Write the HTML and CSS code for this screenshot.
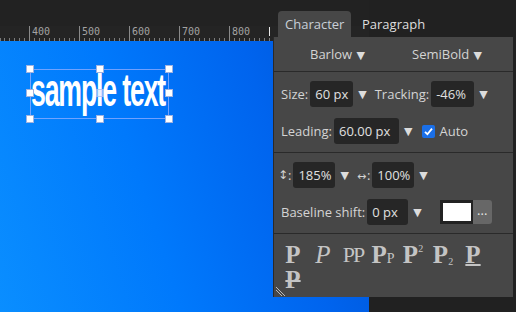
FILE: index.html
```html
<!DOCTYPE html>
<html lang="en">
<head>
    <meta charset="UTF-8">
    <meta name="viewport" content="width=device-width, initial-scale=1.0">
    <title>Character panel</title>
    <link rel="stylesheet" href="styles.css">
</head>
<body>
    <div class="screen">
        <div class="workspace">
            <div class="topbar"></div>
            <div class="ruler">
                <div class="ruler-labels">
                    <span></span><span>400</span><span>500</span><span>600</span><span>700</span><span>800</span><span></span>
                </div>
                <span class="ruler-cursor"></span>
            </div>
            <div class="canvas">
                <!-- selected text layer with transform handles -->
                <div class="text-layer">
                    <span class="sample">sample text</span>
                    <i class="handle h-tl"></i><i class="handle h-tc"></i><i class="handle h-tr"></i>
                    <i class="handle h-ml"></i><i class="handle h-mc"></i><i class="handle h-mr"></i>
                    <i class="handle h-bl"></i><i class="handle h-bc"></i><i class="handle h-br"></i>
                </div>
            </div>
        </div>

        <div class="panel">
            <div class="tabs">
                <div class="tab active">Character</div>
                <div class="tab">Paragraph</div>
            </div>
            <div class="panel-body">
                <div class="font-row">
                    <span class="font-name">Barlow <span class="arrow">▼</span></span>
                    <span class="font-style">SemiBold <span class="arrow">▼</span></span>
                </div>

                <div class="section">
                    <div class="row">
                        <span class="label">Size:</span>
                        <span class="field w43">60 px</span>
                        <span class="arrow">▼</span>
                        <span class="label">Tracking:</span>
                        <span class="field w43">-46%</span>
                        <span class="arrow">▼</span>
                    </div>
                    <div class="row">
                        <span class="label">Leading:</span>
                        <span class="field w65">60.00 px</span>
                        <span class="arrow">▼</span>
                        <span class="check">
                            <svg width="9" height="9" viewBox="0 0 9 9"><path d="M1 4.8 L3.4 7.2 L8 1.6" fill="none" stroke="#fff" stroke-width="1.8"/></svg>
                        </span>
                        <span class="label">Auto</span>
                    </div>
                </div>

                <div class="section">
                    <div class="row">
                        <span class="label scale-label"><span class="vscale">↕</span><span>:</span></span>
                        <span class="field w42">185%</span>
                        <span class="arrow">▼</span>
                        <span class="label"><span class="hscale">↔</span>:</span>
                        <span class="field w42">100%</span>
                        <span class="arrow">▼</span>
                    </div>
                    <div class="row">
                        <span class="label">Baseline shift:</span>
                        <span class="field w41">0 px</span>
                        <span class="arrow">▼</span>
                        <span class="swatch"><span class="swatch-color"></span></span>
                        <span class="swatch-more">...</span>
                    </div>
                </div>

                <div class="glyphs">
                    <span class="glyph">P</span>
                    <span class="glyph italic">P</span>
                    <span class="glyph caps">PP</span>
                    <span class="glyph">P<small>P</small></span>
                    <span class="glyph">P<sup>2</sup></span>
                    <span class="glyph">P<sub>2</sub></span>
                    <span class="glyph under">P</span>
                    <span class="glyph strike">P</span>
                </div>

                <svg class="grip" width="9" height="9" viewBox="0 0 9 9">
                    <path d="M0 3 L6 9 M0 0 L9 9" stroke="#bbb" stroke-width="1"/>
                </svg>
            </div>
        </div>
    </div>
</body>
</html>
```

FILE: styles.css
```css
* {
    margin: 0;
    padding: 0;
    box-sizing: border-box;
}

body {
    background: #212121;
    font-family: 'Open Sans', 'DejaVu Sans', sans-serif;
    overflow: hidden;
}

.screen {
    position: relative;
    width: 516px;
    height: 312px;
    background: #212121;
}

.workspace {
    width: 369px;
    display: flex;
    flex-direction: column;
}

.topbar {
    height: 26px;
    background: #222222;
}

/* ruler */
.ruler {
    position: relative;
    height: 15px;
    background-color: #242424;
    background-image: repeating-linear-gradient(90deg, #7a7a7a 0 1px, transparent 1px 5px);
    background-size: 100% 3px;
    background-position: 4px bottom;
    background-repeat: repeat-x;
    overflow: hidden;
}

.ruler-labels {
    display: flex;
    margin-left: -21px;
}

.ruler-labels span {
    flex: 0 0 50px;
    height: 15px;
    border-left: 1px solid #8a8a8a;
    padding-left: 2px;
    font-family: 'DejaVu Sans Mono', monospace;
    font-size: 10px;
    line-height: 11px;
    color: #a3a3a3;
}

.ruler-cursor {
    position: absolute;
    left: 269px;
    top: 1px;
    width: 1px;
    height: 9px;
    background: #e8e8e8;
}

/* canvas */
.canvas {
    position: relative;
    height: 271px;
    background: linear-gradient(72deg, #0a8eff 0%, #0079fc 40%, #0064ee 72%, #0052d2 100%);
    overflow: hidden;
}

.text-layer {
    position: absolute;
    left: 30px;
    top: 28px;
    width: 139px;
    height: 50px;
    border: 1px solid rgba(150, 175, 255, 0.75);
}

.sample {
    position: absolute;
    left: 0;
    top: -3px;
    font-family: 'Liberation Sans', Arial, sans-serif;
    font-weight: bold;
    font-size: 46px;
    line-height: 46px;
    letter-spacing: -2px;
    color: #fff;
    white-space: nowrap;
    transform: scaleX(0.58);
    transform-origin: left top;
}

.handle {
    position: absolute;
    width: 8px;
    height: 8px;
    background: #fff;
    border: 1px solid #9fb2e0;
}

.h-tl, .h-ml, .h-bl { left: -5px; }
.h-tc, .h-mc, .h-bc { left: 65px; }
.h-tr, .h-mr, .h-br { right: -5px; }
.h-tl, .h-tc, .h-tr { top: -5px; }
.h-ml, .h-mc, .h-mr { top: 19px; }
.h-bl, .h-bc, .h-br { bottom: -5px; }
.h-mc { background: rgba(220, 230, 255, 0.55); border-color: rgba(160, 180, 240, 0.6); }

/* character panel */
.panel {
    position: absolute;
    left: 274px;
    top: 11px;
    width: 239px;
    color: #d4d4d4;
    font-size: 13px;
}

.tabs {
    display: flex;
    height: 26px;
    padding-left: 4px;
}

.tab {
    padding: 0 7px;
    line-height: 26px;
    color: #dedede;
}

.tab.active {
    width: 73px;
    background: #474747;
    border-radius: 4px 4px 0 0;
    color: #c9d0d8;
    margin-right: 4px;
}

.panel-body {
    position: relative;
    height: 260px;
    background: #474747;
    box-shadow: -1px 0 0 #2a2a2a;
}

.font-row {
    display: flex;
    align-items: center;
    height: 35px;
    padding-left: 36px;
    border-bottom: 1px solid #2a2a2a;
}

.font-name {
    width: 102px;
}

.section {
    display: flex;
    flex-direction: column;
    gap: 11px;
    padding: 9px 0 8px 7px;
    border-bottom: 1px solid #2a2a2a;
}

.row {
    display: flex;
    align-items: center;
    height: 26px;
}

.label {
    margin-right: 2px;
    white-space: nowrap;
}

.field {
    height: 26px;
    line-height: 26px;
    padding-left: 5px;
    background: #262626;
    border-radius: 3px;
    color: #e0e0e0;
}

.w41 { width: 41px; }
.w42 { width: 42px; }
.w43 { width: 43px; }
.w65 { width: 65px; }

.arrow {
    font-family: 'DejaVu Sans', sans-serif;
    font-size: 11px;
    color: #dcdcdc;
    margin: 0 8px 0 5px;
}

.font-row .arrow {
    margin: 0 0 0 1px;
}

.scale-label {
    display: flex;
    align-items: center;
    margin-left: -3px;
    margin-right: 2px;
}

.vscale {
    display: inline-block;
    width: 10px;
    font-family: 'DejaVu Sans', sans-serif;
    font-size: 12px;
    text-align: center;
}

.hscale {
    display: inline-block;
    width: 10px;
    font-family: 'DejaVu Sans', sans-serif;
    font-size: 11px;
}

.check {
    display: flex;
    align-items: center;
    justify-content: center;
    width: 13px;
    height: 13px;
    margin: 0 4px 0 2px;
    background: #1a6fe8;
    border-radius: 2px;
}

.swatch {
    width: 33px;
    height: 24px;
    padding: 3px 2px 3px 3px;
    background: #222;
    margin-left: 10px;
}

.swatch-color {
    display: block;
    width: 100%;
    height: 100%;
    background: #fff;
}

.swatch-more {
    width: 19px;
    height: 24px;
    line-height: 20px;
    text-align: center;
    background: #676767;
    border-radius: 0 3px 3px 0;
    color: #e6e6e6;
}

.glyphs {
    display: flex;
    flex-wrap: wrap;
    padding: 8px 0 0 4px;
}

.glyph {
    width: 30px;
    height: 25px;
    text-align: center;
    font-family: 'Liberation Serif', 'Times New Roman', serif;
    font-weight: bold;
    font-size: 25px;
    line-height: 25px;
    color: #c4c4c4;
}

.glyph.italic {
    font-style: italic;
    font-weight: normal;
}

.glyph.caps {
    font-weight: normal;
    font-size: 22px;
    letter-spacing: -2px;
}

.glyph small {
    font-size: 14px;
    font-weight: normal;
}

.glyph sup,
.glyph sub {
    font-size: 10px;
    font-weight: normal;
    line-height: 0;
}

.glyph sup {
    vertical-align: 11px;
}

.glyph sub {
    vertical-align: -2px;
}

.glyph.under {
    text-decoration: underline;
    text-decoration-thickness: 2px;
}

.glyph.strike {
    text-decoration: line-through;
    text-decoration-thickness: 2px;
}

.grip {
    position: absolute;
    left: 2px;
    bottom: 1px;
}
```
